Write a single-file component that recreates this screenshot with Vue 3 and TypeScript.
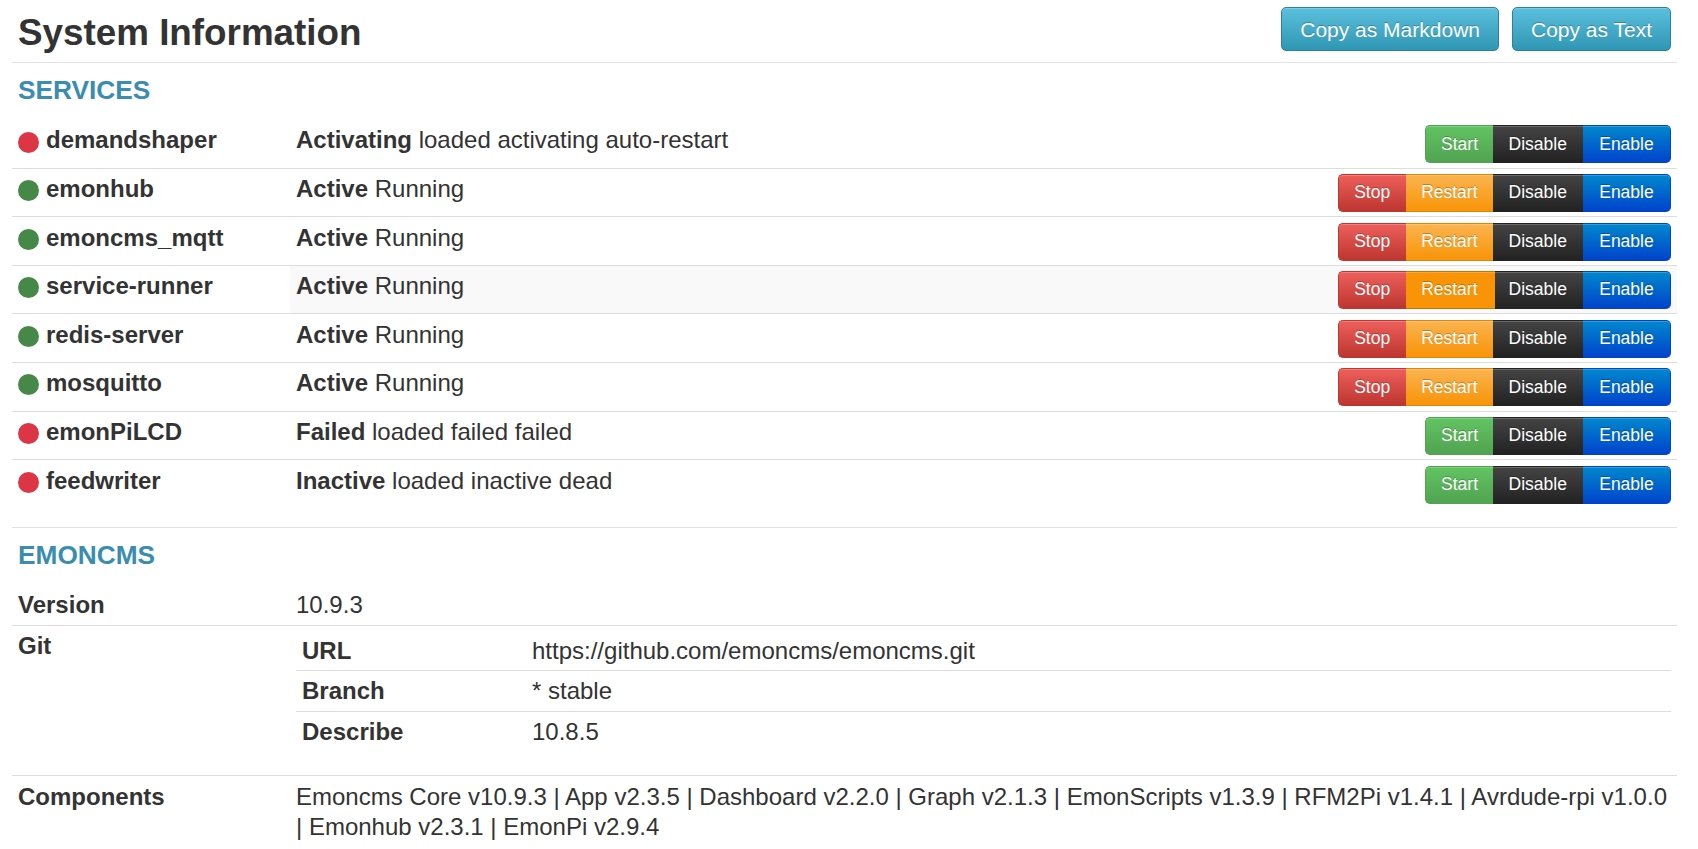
<script setup lang="ts">
interface Service { name: string; ok: boolean; state: string; detail: string; hover?: boolean }
const services: Service[] = [
  { name: 'demandshaper', ok: false, state: 'Activating', detail: 'loaded activating auto-restart' },
  { name: 'emonhub', ok: true, state: 'Active', detail: 'Running' },
  { name: 'emoncms_mqtt', ok: true, state: 'Active', detail: 'Running' },
  { name: 'service-runner', ok: true, state: 'Active', detail: 'Running', hover: true },
  { name: 'redis-server', ok: true, state: 'Active', detail: 'Running' },
  { name: 'mosquitto', ok: true, state: 'Active', detail: 'Running' },
  { name: 'emonPiLCD', ok: false, state: 'Failed', detail: 'loaded failed failed' },
  { name: 'feedwriter', ok: false, state: 'Inactive', detail: 'loaded inactive dead' },
]
const git = [
  ['URL', 'https://github.com/emoncms/emoncms.git'],
  ['Branch', '* stable'],
  ['Describe', '10.8.5'],
]
</script>

<template>
  <div class="page">
    <header class="head">
      <h2 class="title">System Information</h2>
      <div class="copy">
        <button class="btn-copy">Copy as Markdown</button>
        <button class="btn-copy">Copy as Text</button>
      </div>
    </header>

    <h3 class="section first">SERVICES</h3>
    <div class="services">
      <div v-for="s in services" :key="s.name" class="svc" :class="{ hover: s.hover }">
        <div class="svc-name">
          <span class="dot" :class="s.ok ? 'green' : 'red'"></span>
          <b>{{ s.name }}</b>
        </div>
        <div class="svc-state"><b>{{ s.state }}</b> {{ s.detail }}</div>
        <div class="svc-actions">
          <div class="group">
            <template v-if="s.ok">
              <button class="b stop">Stop</button>
              <button class="b restart">Restart</button>
            </template>
            <button v-else class="b start">Start</button>
            <button class="b disable">Disable</button>
            <button class="b enable">Enable</button>
          </div>
        </div>
      </div>
    </div>

    <h3 class="section second">EMONCMS</h3>
    <div class="info">
      <div class="info-row version">
        <b class="label">Version</b>
        <div class="value">10.9.3</div>
      </div>
      <div class="info-row git">
        <b class="label">Git</b>
        <div class="value sub">
          <div v-for="g in git" :key="g[0]" class="sub-row">
            <b class="sub-label">{{ g[0] }}</b>
            <span>{{ g[1] }}</span>
          </div>
        </div>
      </div>
      <div class="info-row comps">
        <b class="label">Components</b>
        <div class="value">Emoncms Core v10.9.3 | App v2.3.5 | Dashboard v2.2.0 | Graph v2.1.3 | EmonScripts v1.3.9 | RFM2Pi v1.4.1 | Avrdude-rpi v1.0.0 | Emonhub v2.3.1 | EmonPi v2.9.4</div>
      </div>
    </div>
  </div>
</template>

<style scoped>
.page {
  box-sizing: border-box;
  width: 1698px;
  height: 849px;
  overflow: hidden;
  padding: 0 21px 0 12px;
  font-family: "Liberation Sans", Arial, sans-serif;
  font-size: 24px;
  line-height: 28px;
  color: #333;
  background: #fff;
}
.head {
  display: flex;
  justify-content: space-between;
  height: 62px;
  border-bottom: 1px solid #e2e2e8;
  padding-left: 6px;
}
.title {
  margin: 0;
  font-size: 36.8px;
  line-height: 66px;
  font-weight: 700;
}
.copy {
  display: flex;
  gap: 13px;
  padding: 7px 6px 0 0;
}
.btn-copy {
  box-sizing: border-box;
  height: 44px;
  padding: 0 18px;
  font: 21px/1 "Liberation Sans", Arial, sans-serif;
  color: #fff;
  border: 1px solid #2f7f9c;
  border-radius: 5px;
  background: linear-gradient(#5bc0de, #2f96b4);
  text-shadow: 0 -1px 0 rgba(0, 0, 0, 0.25);
  box-shadow: inset 0 1px 0 rgba(255, 255, 255, 0.2), 0 1px 2px rgba(0, 0, 0, 0.05);
}
.section {
  margin: 0;
  padding-left: 6px;
  font-size: 26.25px;
  font-weight: 700;
  color: #3a8db0;
}
.section.first {
  line-height: 54px;
}
.section.second {
  line-height: 54px;
  padding-bottom: 2px;
  border-top: 1px solid #e2e2e8;
}
.services {
  padding-top: 3px;
}
.svc {
  box-sizing: border-box;
  display: grid;
  grid-template-columns: 278px 1fr auto;
  height: 48.6px;
  border-bottom: 1px solid #ddd;
}
.svc:last-child {
  border-bottom: 0;
  height: 67px;
}
.svc-name {
  display: flex;
  align-items: flex-start;
  gap: 7px;
  padding: 6.4px 0 0 6px;
}
.dot {
  flex: none;
  width: 21px;
  height: 21px;
  margin-top: 5px;
  border-radius: 50%;
}
.red { background: #dc3545; }
.green { background: #468847; }
.svc-state {
  padding: 6.4px 6px 0;
}
.svc:first-child .svc-state {
  padding-top: 5.5px;
}
.svc:first-child .svc-name {
  padding-top: 5.5px;
}
.svc:first-child .dot {
  margin-top: 6px;
}
.svc-actions {
  padding: 5.4px 6px 0 0;
}
.svc.hover .svc-state,
.svc.hover .svc-actions {
  background: #f9f9f9;
}
.group {
  display: flex;
}
.b {
  box-sizing: border-box;
  height: 38px;
  padding: 0 15.5px;
  font: 17.5px/1 "Liberation Sans", Arial, sans-serif;
  color: #fff;
  border: 1px solid transparent;
  border-left: 0;
  border-right: 0;
  text-shadow: 0 -1px 0 rgba(0, 0, 0, 0.25);
  box-shadow: inset 0 1px 0 rgba(255, 255, 255, 0.2);
}
.group .b:first-child {
  border-radius: 5px 0 0 5px;
  border-left: 1px solid transparent;
}
.group .b:last-child {
  border-radius: 0 5px 5px 0;
  border-right: 1px solid transparent;
  padding: 0 16.3px;
}
.stop { background: linear-gradient(#ee5f5b, #bd362f); border-color: #bd362f !important; }
.restart { background: linear-gradient(#fbb450, #f89406); border-color: #e08505 !important; padding-right: 15px; }
.start { background: linear-gradient(#62c462, #51a351); border-color: #51a351 !important; padding-right: 14.5px; }
.disable { background: linear-gradient(#444, #222); border-color: #222 !important; padding: 0 16px; }
.enable { background: linear-gradient(#08c, #0044cc); border-color: #04c !important; }
.svc.hover .restart {
  background: #f89406;
  border-color: #c67605 !important;
  padding-right: 17px;
}
.svc.hover .disable {
  padding-left: 14px;
}
.info-row {
  display: grid;
  grid-template-columns: 278px 1fr;
  padding: 0 6px;
}
.version {
  height: 41px;
  align-items: center;
  border-bottom: 1px solid #ddd;
}
.git {
  padding-top: 6px;
  height: 143px;
  border-bottom: 1px solid #ddd;
}
.sub {
  margin-top: -2px;
}
.sub-row {
  box-sizing: border-box;
  display: grid;
  grid-template-columns: 230px 1fr;
  height: 41px;
  align-items: center;
  padding-left: 6px;
  border-bottom: 1px solid #ddd;
}
.sub-row:first-child { padding-top: 2px; }
.sub-row:last-child { border-bottom: 0; padding-bottom: 1px; }
.comps {
  padding-top: 6px;
  line-height: 30px;
}
</style>
